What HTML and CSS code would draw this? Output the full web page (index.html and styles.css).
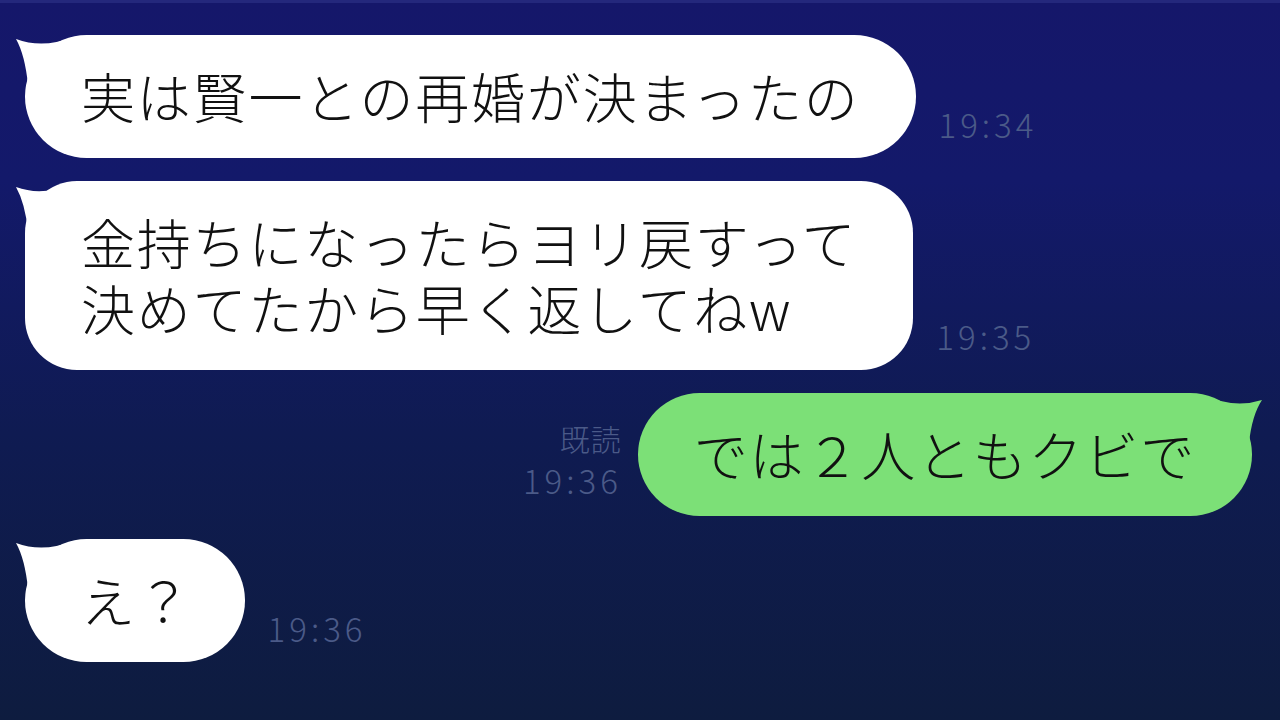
FILE: index.html
```html
<!DOCTYPE html>
<html lang="ja">
<head>
    <meta charset="UTF-8">
    <title>トーク</title>
    <link rel="stylesheet" href="styles.css">
</head>
<body>
    <div class="chat">
        <!-- 相手 -->
        <div class="row left">
            <div class="bubble white pill">
                <svg class="tail tail-left" viewBox="0 0 70 60"><path d="M3 4 Q30 14 60 2 L60 50 L15 50 Q12 20 3 4 Z"/></svg>
                <p>実は賢一との再婚が決まったの</p>
            </div>
            <span class="time">19:34</span>
        </div>

        <div class="row left">
            <div class="bubble white">
                <svg class="tail tail-left" viewBox="0 0 70 60"><path d="M3 6 Q30 16 60 2 L60 50 L15 50 Q12 22 3 6 Z"/></svg>
                <p class="line">金持ちになったらヨリ戻すって</p>
                <p class="line">決めてたから早く返してねw</p>
            </div>
            <span class="time">19:35</span>
        </div>

        <!-- 自分 -->
        <div class="row right">
            <div class="meta">
                <span>既読</span>
                <span>19:36</span>
            </div>
            <div class="bubble green pill">
                <svg class="tail tail-right" viewBox="0 0 70 60"><path d="M68 7 Q40 16 10 2 L10 50 L55 50 Q58 22 68 7 Z"/></svg>
                <p>では２人ともクビで</p>
            </div>
        </div>

        <div class="row left">
            <div class="bubble white pill short">
                <svg class="tail tail-left" viewBox="0 0 70 60"><path d="M3 4 Q30 14 60 2 L60 50 L15 50 Q12 20 3 4 Z"/></svg>
                <p>え？</p>
            </div>
            <span class="time">19:36</span>
        </div>
    </div>
</body>
</html>
```

FILE: styles.css
```css
* {
    margin: 0;
    padding: 0;
    box-sizing: border-box;
}

body {
    width: 1280px;
    height: 720px;
    overflow: hidden;
    font-family: "Noto Sans CJK JP", "Noto Sans", sans-serif;
    background: linear-gradient(#15176a 0%, #13196a 25%, #0f1b52 60%, #0e1c3f 100%);
    border-top: 3px solid #24287c;
}

/* Chat column */
.chat {
    display: flex;
    flex-direction: column;
    gap: 23px;
    padding: 32px 28px 0 25px;
}

.row {
    display: flex;
    align-items: flex-end;
}

.row.right {
    justify-content: flex-end;
}

/* Bubbles */
.bubble {
    position: relative;
    padding: 28px 56px 29px 56px;
    border-radius: 52px;
    color: #111111;
    font-size: 54px;
    font-weight: 300;
    line-height: 66px;
    letter-spacing: 1.8px;
}

.bubble p {
    position: relative;
    white-space: nowrap;
}

.bubble .line {
    height: 66px;
}

.bubble.pill {
    border-radius: 62px;
}

.bubble.short {
    padding-right: 52px;
}

.bubble.white {
    background-color: #ffffff;
}

.bubble.green {
    background-color: #7ce077;
}

.tail {
    position: absolute;
    top: 0;
    width: 70px;
    height: 60px;
}

.tail-left {
    left: -12px;
}

.white .tail path {
    fill: #ffffff;
}

.tail-right {
    right: -12px;
}

.green .tail path {
    fill: #7ce077;
}

/* Time + read mark */
.time,
.meta {
    color: #4b5a88;
    font-size: 33px;
    font-weight: 300;
    line-height: 40px;
    letter-spacing: 4px;
}

.time {
    margin-left: 23px;
    margin-bottom: 14px;
}

.meta {
    display: flex;
    flex-direction: column;
    align-items: flex-end;
    margin-right: 16px;
    margin-bottom: 16px;
}

.meta span:first-child {
    font-size: 30px;
    letter-spacing: 1px;
    line-height: 44px;
}
```
